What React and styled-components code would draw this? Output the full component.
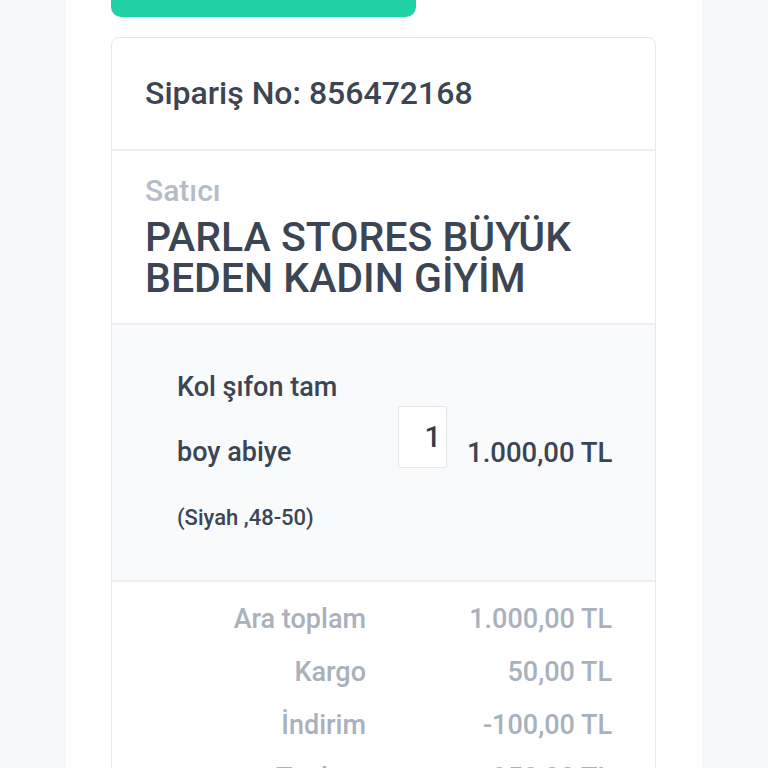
import React from 'react';
import styled, { createGlobalStyle } from 'styled-components';

const GlobalStyle = createGlobalStyle`
  html, body {
    margin: 0;
    padding: 0;
    background: #f6f8fb;
    font-family: Roboto, "Noto Sans", "Liberation Sans", sans-serif;
    -webkit-font-smoothing: antialiased;
  }
`;

const order = {
  no: '856472168',
  seller: 'PARLA STORES BÜYÜK BEDEN KADIN GİYİM',
  item: { name: 'Kol şıfon tam boy abiye', variant: '(Siyah ,48-50)', qty: 1, price: '1.000,00 TL' },
  totals: [
    { label: 'Ara toplam', value: '1.000,00 TL' },
    { label: 'Kargo', value: '50,00 TL' },
    { label: 'İndirim', value: '-100,00 TL' },
    { label: 'Toplam', value: '950,00 TL' },
  ],
};

export default function App() {
  return (
    <>
      <GlobalStyle />
      <Page>
        <Panel>
          <GreenButton />
          <Card>
            <Header>Sipariş No: {order.no}</Header>
            <SellerSection>
              <SellerLabel>Satıcı</SellerLabel>
              <SellerName>{order.seller}</SellerName>
            </SellerSection>
            <ItemSection>
              <ItemInfo>
                <ItemName>{order.item.name}</ItemName>
                <ItemVariant>{order.item.variant}</ItemVariant>
              </ItemInfo>
              <QtyBox>{order.item.qty}</QtyBox>
              <ItemPrice>{order.item.price}</ItemPrice>
            </ItemSection>
            <TotalsSection>
              {order.totals.map((t) => (
                <TotalRow key={t.label}>
                  <TotalLabel>{t.label}</TotalLabel>
                  <TotalValue>{t.value}</TotalValue>
                </TotalRow>
              ))}
            </TotalsSection>
          </Card>
        </Panel>
      </Page>
    </>
  );
}

const Page = styled.div`
  height: 768px;
  overflow: hidden;
`;

const Panel = styled.div`
  width: 636px;
  margin-left: 66px;
  min-height: 768px;
  background: #fff;
  padding: 0 46px 0 45px;
  box-sizing: border-box;
`;

const GreenButton = styled.div`
  width: 305px;
  height: 50px;
  margin-top: -33px;
  background: #20d2a6;
  border-radius: 10px;
`;

const Card = styled.div`
  margin-top: 20px;
  border: 1px solid #e6e8ec;
  border-radius: 8px;
  overflow: hidden;
  color: #3b4553;
`;

const Header = styled.div`
  padding: 38px 33px;
  font-size: 32px;
  font-weight: 500;
  line-height: 35px;
  border-bottom: 2px solid #eceef1;
`;

const SellerSection = styled.div`
  padding: 21px 33px 24px;
  border-bottom: 2px solid #eceef1;
`;

const SellerLabel = styled.div`
  font-size: 30px;
  font-weight: 500;
  line-height: 38px;
  color: #b5bcc7;
`;

const SellerName = styled.div`
  margin-top: 7px;
  font-size: 41px;
  font-weight: 500;
  line-height: 41px;
`;

const ItemSection = styled.div`
  display: grid;
  grid-template-columns: 201px 49px auto;
  column-gap: 20px;
  align-items: center;
  padding: 30px 44px 30px 65px;
  background: #f9fafb;
  border-bottom: 2px solid #eceef1;
`;

const ItemInfo = styled.div`
  display: flex;
  flex-direction: column;
`;

const ItemName = styled.div`
  font-size: 27px;
  font-weight: 500;
  line-height: 65px;
`;

const ItemVariant = styled.div`
  font-size: 22px;
  font-weight: 500;
  line-height: 65px;
`;

const QtyBox = styled.div`
  height: 62px;
  margin-bottom: 32px;
  box-sizing: border-box;
  padding-right: 5px;
  background: #fff;
  border: 1px solid #e3e6ea;
  border-radius: 2px;
  font-size: 29px;
  font-weight: 500;
  line-height: 60px;
  text-align: right;
  color: #353e4b;
`;

const ItemPrice = styled.div`
  font-size: 27.5px;
  font-weight: 500;
  text-align: left;
  white-space: nowrap;
`;

const TotalsSection = styled.div`
  padding: 11px 43px 20px 0;
`;

const TotalRow = styled.div`
  display: grid;
  grid-template-columns: 1fr 200px;
  column-gap: 46px;
  line-height: 53px;
  font-size: 27px;
  font-weight: 500;
  color: #a9b1bd;
`;

const TotalLabel = styled.div`
  text-align: right;
`;

const TotalValue = styled.div`
  text-align: right;
`;
